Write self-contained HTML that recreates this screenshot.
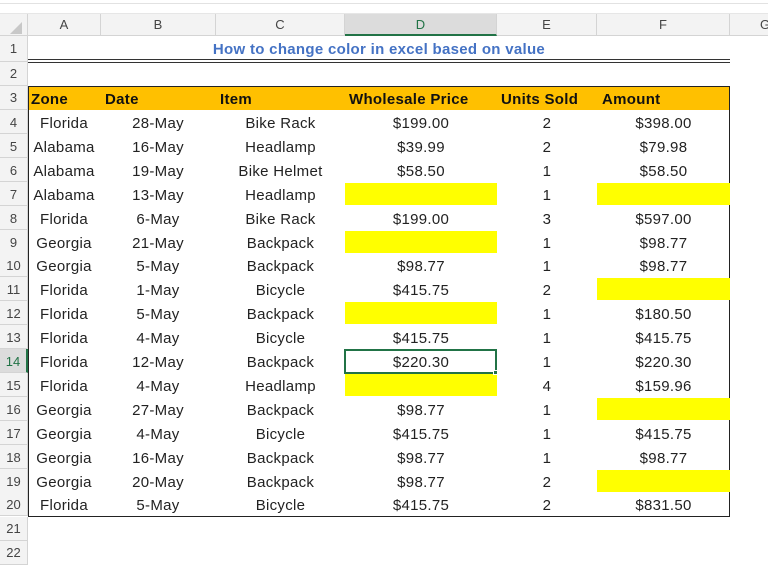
<!DOCTYPE html>
<html><head><meta charset="utf-8"><style>
*{margin:0;padding:0;box-sizing:border-box}
body{width:768px;height:551px;overflow:hidden;background:#fff;font-family:"Liberation Sans",sans-serif;position:relative;color:#222}
.a{position:absolute}
.ch{top:14px;height:22px;background:#f3f3f3;border-right:1px solid #d4d4d4;border-bottom:1px solid #d4d4d4;font-size:13px;color:#444;text-align:center;line-height:22px}
.rh{left:0;width:28px;background:#f3f3f3;border-bottom:1px solid #d4d4d4;border-right:1px solid #d4d4d4;font-size:13px;color:#444;text-align:center}
.row{position:absolute;left:28px;width:702px;height:24px;font-size:15px;line-height:24px;letter-spacing:0.3px}
.row span{position:absolute;top:2px;height:24px;text-align:center}
.c1{left:0;width:72px}.c2{left:72px;width:116px}.c3{left:188px;width:129px}.c4{left:317px;width:152px}.c5{left:469px;width:100px}.c6{left:569px;width:133px}
.row span.y{background:#ffff00;top:1px;height:22px}
</style></head><body>
<div class="a" style="left:0;top:0;width:768px;height:14px;background:#fff;border-bottom:1px solid #e6e6e6"></div>
<div class="a" style="left:0;top:3px;width:768px;height:1px;background:#e2e2e2"></div>
<div class="a ch" style="left:0;width:28px"></div>
<div class="a" style="left:10px;top:22px;width:0;height:0;border-left:12px solid transparent;border-bottom:12px solid #c8c8c8"></div>
<div class="a ch" style="left:28px;width:73px">A</div>
<div class="a ch" style="left:101px;width:115px">B</div>
<div class="a ch" style="left:216px;width:129px">C</div>
<div class="a ch" style="left:345px;width:152px;background:#dcdcdc;color:#217346;border-bottom:2px solid #217346">D</div>
<div class="a ch" style="left:497px;width:100px">E</div>
<div class="a ch" style="left:597px;width:133px">F</div>
<div class="a ch" style="left:730px;width:60px;text-align:left;padding-left:30px">G</div>
<div class="a rh" style="top:36px;height:26px;line-height:26px">1</div>
<div class="a rh" style="top:62px;height:24px;line-height:24px">2</div>
<div class="a" style="left:28px;top:38px;width:702px;height:24px;text-align:center;font-weight:bold;color:#4472c4;font-size:15px;line-height:24px;letter-spacing:0.3px">How to change color in excel based on value</div>
<div class="a" style="left:28px;top:59px;width:702px;height:4px;border-top:1px solid #333;border-bottom:1px solid #333"></div>
<div class="a" style="left:28px;top:86px;width:702px;height:431px;border:1px solid #222"></div>
<div class="a" style="left:29px;top:87px;width:700px;height:23px;background:#ffc000"></div>
<div class="row" style="top:86px;font-weight:bold;color:#111">
<span style="left:3px">Zone</span><span style="left:77px">Date</span><span style="left:192px">Item</span><span style="left:321px">Wholesale Price</span><span style="left:473px">Units Sold</span><span style="left:574px">Amount</span></div>
<div class="a rh" style="top:86px;height:24px;line-height:24px">3</div>
<div id="rows"></div>
<div class="a rh" style="top:517px;height:24px;line-height:24px">21</div>
<div class="a rh" style="top:541px;height:24px;line-height:24px">22</div>
<script>
var d=[["Florida","28-May","Bike Rack","$199.00","2","$398.00"],["Alabama","16-May","Headlamp","$39.99","2","$79.98"],["Alabama","19-May","Bike Helmet","$58.50","1","$58.50"],["Alabama","13-May","Headlamp","","1",""],["Florida","6-May","Bike Rack","$199.00","3","$597.00"],["Georgia","21-May","Backpack","","1","$98.77"],["Georgia","5-May","Backpack","$98.77","1","$98.77"],["Florida","1-May","Bicycle","$415.75","2",""],["Florida","5-May","Backpack","","1","$180.50"],["Florida","4-May","Bicycle","$415.75","1","$415.75"],["Florida","12-May","Backpack","$220.30","1","$220.30"],["Florida","4-May","Headlamp","","4","$159.96"],["Georgia","27-May","Backpack","$98.77","1",""],["Georgia","4-May","Bicycle","$415.75","1","$415.75"],["Georgia","16-May","Backpack","$98.77","1","$98.77"],["Georgia","20-May","Backpack","$98.77","2",""],["Florida","5-May","Bicycle","$415.75","2","$831.50"]];
var h="";
for(var i=0;i<d.length;i++){var t=(110+i*23.9).toFixed(1);var r=d[i];
h+='<div class="a rh" style="top:'+t+'px;height:24px;line-height:26px;'+(i==10?'background:#dcdcdc;color:#217346;border-right:2px solid #217346':'')+'">'+(i+4)+'</div>';
h+='<div class="row" style="top:'+t+'px">';
for(var j=0;j<6;j++){var y=(j==3||j==5)&&r[j]=="";h+='<span class="c'+(j+1)+(y?' y':'')+'">'+r[j]+'</span>';}
h+='</div>';}
h+='<div class="a" style="left:344px;top:349px;width:153px;height:25px;border:2px solid #217346"></div><div class="a" style="left:493px;top:370px;width:5px;height:5px;background:#217346;border:1px solid #fff"></div>';
document.getElementById("rows").innerHTML=h;
</script>
</body></html>
